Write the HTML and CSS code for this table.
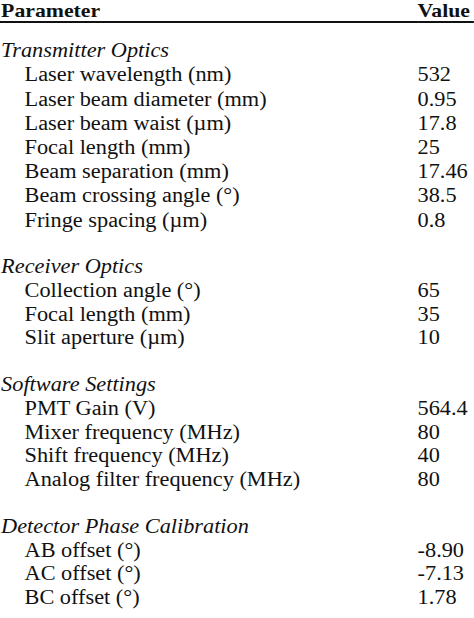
FILE: index.html
```html
<!DOCTYPE html>
<html lang="en">
<head>
<meta charset="utf-8">
<title>Parameters</title>
<link rel="stylesheet" href="styles.css">
</head>
<body>
<div class="sheet">
  <table class="params">
    <colgroup><col class="c-name"><col class="c-val"></colgroup>
    <thead>
      <tr><th class="h-name">Parameter</th><th class="h-val">Value</th></tr>
    </thead>
    <tbody class="group first">
      <tr class="section"><td colspan="2">Transmitter Optics</td></tr>
      <tr><td class="name">Laser wavelength (nm)</td><td class="val">532</td></tr>
      <tr><td class="name">Laser beam diameter (mm)</td><td class="val">0.95</td></tr>
      <tr><td class="name">Laser beam waist (µm)</td><td class="val">17.8</td></tr>
      <tr><td class="name">Focal length (mm)</td><td class="val">25</td></tr>
      <tr><td class="name">Beam separation (mm)</td><td class="val">17.46</td></tr>
      <tr><td class="name">Beam crossing angle (°)</td><td class="val">38.5</td></tr>
      <tr><td class="name">Fringe spacing (µm)</td><td class="val">0.8</td></tr>
    </tbody>
    <tbody class="group">
      <tr class="section"><td colspan="2">Receiver Optics</td></tr>
      <tr><td class="name">Collection angle (°)</td><td class="val">65</td></tr>
      <tr><td class="name">Focal length (mm)</td><td class="val">35</td></tr>
      <tr><td class="name">Slit aperture (µm)</td><td class="val">10</td></tr>
    </tbody>
    <tbody class="group">
      <tr class="section"><td colspan="2">Software Settings</td></tr>
      <tr><td class="name">PMT Gain (V)</td><td class="val">564.4</td></tr>
      <tr><td class="name">Mixer frequency (MHz)</td><td class="val">80</td></tr>
      <tr><td class="name">Shift frequency (MHz)</td><td class="val">40</td></tr>
      <tr><td class="name">Analog filter frequency (MHz)</td><td class="val">80</td></tr>
    </tbody>
    <tbody class="group">
      <tr class="section"><td colspan="2">Detector Phase Calibration</td></tr>
      <tr><td class="name">AB offset (°)</td><td class="val">-8.90</td></tr>
      <tr><td class="name">AC offset (°)</td><td class="val">-7.13</td></tr>
      <tr><td class="name">BC offset (°)</td><td class="val">1.78</td></tr>
    </tbody>
  </table>
</div>
</body>
</html>
```

FILE: styles.css
```css
html, body {
  margin: 0;
  padding: 0;
  background: #ffffff;
}

body {
  font-family: "Liberation Serif", "Times New Roman", serif;
  color: #111111;
  overflow: hidden;
}

.sheet {
  width: 425px;
  transform: scaleX(1.115);
  transform-origin: 0 0;
}

.params {
  width: 425px;
  table-layout: fixed;
  border-collapse: separate;
  border-spacing: 0;
  font-size: 20px;
  line-height: 23.6px;
}

.c-name { width: 374.5px; }

.params th {
  font-size: 19.5px;
  font-weight: bold;
  line-height: 21px;
  padding: 0;
  border-bottom: 2px solid #111111;
  text-align: left;
  white-space: nowrap;
}

.params th.h-name { padding-left: 1px; }

.params td {
  padding: 0;
  white-space: nowrap;
}

.section td {
  font-style: italic;
  padding-left: 1px;
  padding-top: 23.6px;
}

.group.first td {
  line-height: 24.2px;
}

.group.first .section td {
  padding-top: 15.2px;
}

.params td.name {
  padding-left: 22px;
}

.params td.val {
  padding-left: 0;
}
```
